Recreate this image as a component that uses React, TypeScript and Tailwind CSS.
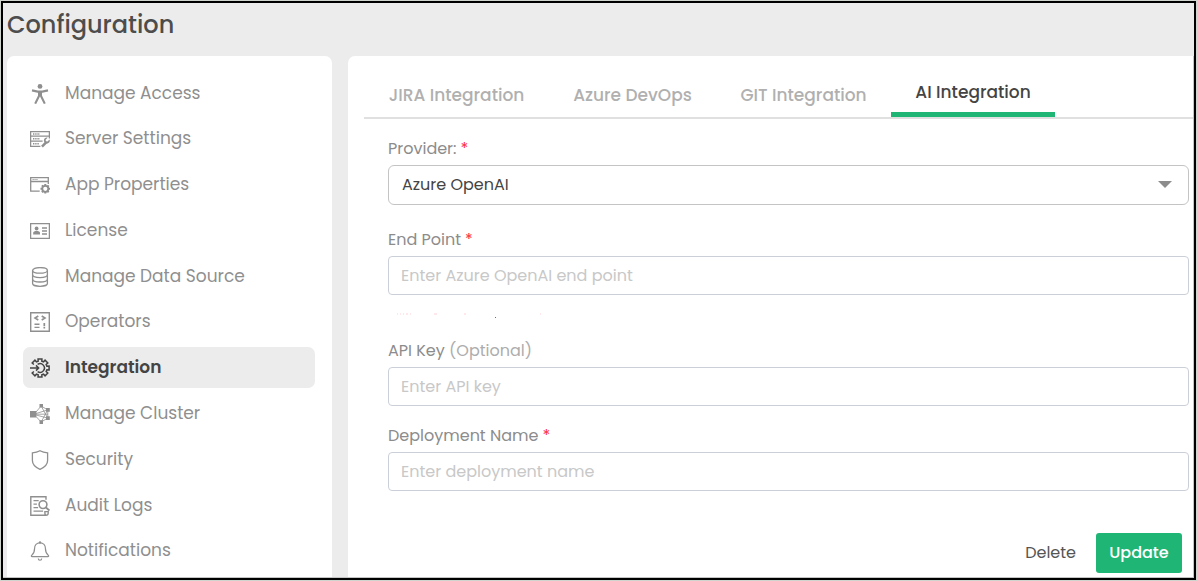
import { useState, type ReactNode } from "react";

type NavItem = {
  name: string;
  icon: ReactNode;
};

type Tab = {
  name: string;
  width: string;
};

// seven teeth of an eight-toothed gear, left open where the arrow comes in
const GEAR_POINTS = [-3, -2, -1, 0, 1, 2, 3]
  .flatMap(k => [
    [7.1, k * 45 - 15],
    [9.3, k * 45 - 12],
    [9.3, k * 45 + 12],
    [7.1, k * 45 + 15],
  ])
  .map(([r, deg]) => {
    const a = (deg * Math.PI) / 180;
    return `${(10 + r * Math.cos(a)).toFixed(2)},${(10 + r * Math.sin(a)).toFixed(2)}`;
  })
  .join(" ");

const NAV_ITEMS: NavItem[] = [
  {
    name: "Manage Access",
    icon: (
      <>
        <circle cx="10" cy="2.4" r="2.4" fill="currentColor" stroke="none" />
        <path d="M2 6.4 7.6 7.6h4.8L18 6.4" strokeWidth="2.1" />
        <path d="M8 7.5h4v5.2H8z" fill="currentColor" stroke="none" />
        <path d="M9 12 5.2 19.6M11 12l3.8 7.6" strokeWidth="2.1" />
      </>
    ),
  },
  {
    name: "Server Settings",
    icon: (
      <>
        <path d="M.6 2.6h18.8v4.6H.6zM12.6 12.2H.6V7.2h18.8v2.2M10.4 17.4H.6v-5.2" strokeWidth="1.3" />
        <path d="M3 4.9h7M3 9.7h7M3 14.8h6" strokeDasharray="1.4 .8" strokeWidth="1.5" />
        <path d="M12 17.6l4.4-4.4" strokeWidth="2.6" />
        <path d="M19.5 10.6l-2 2-1.6-.4-.3-1.5 2-2c-2-.6-4.2 1.2-3.6 3.5.4 1.8 2.6 2.6 4 2 1.6-.6 2.2-2.2 1.5-3.6z" fill="currentColor" stroke="none" />
      </>
    ),
  },
  {
    name: "App Properties",
    icon: (
      <>
        <path d="M18.3 9V2.6H.7v13.6h9M.7 6.5h17.6" strokeWidth="1.3" />
        <path d="M2.6 4.5h5" strokeDasharray="1.1 .8" strokeWidth="1.2" />
        <circle cx="15.3" cy="13.8" r="3" strokeWidth="1.8" />
        <path d="M15.3 9v1.5M15.3 17.1v1.5M10.5 13.8H12M18.600 13.8h1.5M11.9 10.400l1.1 1.1M17.6 16.1l1.1 1.1M11.9 17.2l1.1-1.1M17.6 11.500l1.1-1.1" strokeWidth="2" />
      </>
    ),
  },
  {
    name: "License",
    icon: (
      <>
        <path d="M.6 2.6h18.8v14.8H.6z" strokeWidth="1.3" />
        <circle cx="6.6" cy="7.5" r="1.9" fill="currentColor" stroke="none" />
        <path d="M3.2 13.6v-1.8c0-1.1 1.5-1.7 3.4-1.7s3.4.6 3.4 1.7v1.8z" fill="currentColor" stroke="none" />
        <path d="M12 7h5M12 10h5M12 13h5" strokeWidth="1.3" />
      </>
    ),
  },
  {
    name: "Manage Data Source",
    icon: (
      <>
        <ellipse cx="10" cy="3.4" rx="7.4" ry="2.8" strokeWidth="1.3" />
        <path d="M2.6 3.4v13c0 1.6 3.3 2.9 7.4 2.9s7.4-1.3 7.4-2.9v-13" strokeWidth="1.3" />
        <path d="M2.6 7.8c0 1.6 3.3 2.8 7.4 2.8s7.4-1.2 7.4-2.8M2.6 12.2c0 1.6 3.3 2.8 7.4 2.8s7.4-1.2 7.4-2.8" strokeWidth="1.3" />
      </>
    ),
  },
  {
    name: "Operators",
    icon: (
      <>
        <path d="M.7.7h18.6v18.6H.7z" strokeWidth="1.4" />
        <path d="M8.3 4 5 6l3.3 2M11.7 4 15 6l-3.3 2" strokeWidth="1.6" />
        <path d="M4.5 12.2h5M4.5 15.4h5" strokeWidth="1.4" />
        <path d="M14.3 11v3.2M14.3 15v1.6" strokeWidth="1.7" />
      </>
    ),
  },
  {
    name: "Integration",
    icon: (
      <>
        <polyline points={GEAR_POINTS} strokeWidth="1.5" />
        <path d="M0 10h8.4M6 7.4 8.600 10 6 12.600" strokeWidth="1.5" />
        <path d="M7.6 6.3a4.4 4.4 0 1 1 0 7.4" strokeWidth="1.5" />
      </>
    ),
  },
  {
    name: "Manage Cluster",
    icon: (
      <>
        <path d="M0 7h6.4v6.4H0zM9.5 0H13v3.5H9.5zM16 4h3.8v3.8H16zM16 12.2h3.8V16H16zM9.5 16.2H13v3.7H9.5z" fill="currentColor" stroke="none" />
        <path d="M6 8 11.2 2l6.6 4v8l-6.6 4L6 12.5M6 9.5 17.5 6M6 11l11.5 3M11.2 2l6.4 12M11.2 18l6.4-12M6 10.2h12" strokeWidth=".8" />
      </>
    ),
  },
  {
    name: "Security",
    icon: <path d="M10 .7C7.7 2 5.2 2.6 2.4 2.8v7.7c0 4.3 3.8 7.2 7.6 8.8 3.8-1.6 7.6-4.5 7.6-8.8V2.8C14.8 2.6 12.3 2 10 .7z" strokeWidth="1.3" />,
  },
  {
    name: "Audit Logs",
    icon: (
      <>
        <path d="M16 3.8V.8H.8v18.4H16c1.4 0 2.2-1 2.2-2.3v-1.3h-3.3v1.5c0 1.2.5 2.1 1.3 2.1" strokeWidth="1.4" />
        <path d="M3.5 4.6h5.2M3.5 8.1h3.4M3.5 11.6h4.6M3.5 15.2h9.6" strokeWidth="1.3" />
        <circle cx="13" cy="8.6" r="3.9" strokeWidth="1.6" />
        <path d="m15.8 11.4 3.6 3.2" strokeWidth="1.9" />
      </>
    ),
  },
  {
    name: "Notifications",
    icon: (
      <>
        <path d="M10 1.8c-3.4 0-5.4 2.5-5.4 5.4 0 4.6-1.5 5.9-3 7.3-.5.5-.2 1.2.4 1.2h16c.6 0 .9-.7.4-1.2-1.5-1.4-3-2.7-3-7.3 0-2.9-2-5.4-5.4-5.4z" strokeWidth="1.2" />
        <path d="M8.3 17.4c0 2.4 3.4 2.4 3.4 0" strokeWidth="1.2" />
        <circle cx="10" cy="1.4" r="1.2" fill="currentColor" stroke="none" />
      </>
    ),
  },
];

const TABS: Tab[] = [
  { name: "JIRA Integration", width: "w-[185px]" },
  { name: "Azure DevOps", width: "w-[167px]" },
  { name: "GIT Integration", width: "w-[175px]" },
  { name: "AI Integration", width: "w-[164px]" },
];

const INPUT_CLASS =
  "block h-[39px] w-full rounded-[4px] border border-[#cbd0d8] bg-white px-3 text-[16px] text-[#444] placeholder:text-[#c8c8c8] focus:outline-none focus:border-[#1fb574]";

function Required() {
  return <span className="ml-1 text-[#ff2a3c]">*</span>;
}

function Label({ htmlFor, children }: { htmlFor: string; children: ReactNode }) {
  return (
    <label htmlFor={htmlFor} className="mb-1 block text-[16px] leading-6 text-[#8c8c8c]">
      {children}
    </label>
  );
}

export default function App() {
  const [section, setSection] = useState("Integration");
  const [tab, setTab] = useState("AI Integration");
  const [provider, setProvider] = useState("Azure OpenAI");

  return (
    <div className="flex min-h-screen bg-[#cfd4cf] p-px font-['Poppins',Inter,sans-serif]">
      <div className="flex min-w-0 flex-1 flex-col border-2 border-black bg-[#ececec]">
        <h1 className="mb-[11px] pt-[2px] pl-1 text-[24px] leading-10 font-medium text-[#4d4d4d]">Configuration</h1>

        <div className="flex flex-1 gap-4 border-r border-b border-[#c4c4c4] pl-1">
          <nav className="flex w-[325px] shrink-0 flex-col justify-between rounded-t-[7px] bg-white px-4 pt-4 pb-[6px]">
            {NAV_ITEMS.map(item => {
              const active = item.name === section;
              return (
                <button
                  key={item.name}
                  type="button"
                  onClick={() => setSection(item.name)}
                  className={`flex h-[41px] w-[292px] items-center gap-[15px] rounded-[7px] pl-[7px] text-left text-[17px] leading-6 ${
                    active ? "bg-[#ececec] font-semibold text-[#444]" : "text-[#8f8f8f]"
                  }`}
                >
                  <svg viewBox="0 0 20 20" className="mt-[2px] h-5 w-5 shrink-0" fill="none" stroke="currentColor">
                    {item.icon}
                  </svg>
                  {item.name}
                </button>
              );
            })}
          </nav>

          <main className="min-w-0 flex-1 rounded-tl-[7px] bg-white pl-4">
            <div role="tablist" className="flex h-[63px] items-stretch border-b-2 border-[#e0e0e0]">
              {TABS.map(t => {
                const active = t.name === tab;
                return (
                  <button
                    key={t.name}
                    type="button"
                    role="tab"
                    aria-selected={active}
                    onClick={() => setTab(t.name)}
                    className={`${t.width} shrink-0 pt-4 text-[17px] leading-6 font-medium ${
                      active ? "border-b-5 border-[#1fb574] text-[#444]" : "text-[#b0b0b0]"
                    }`}
                  >
                    {t.name}
                  </button>
                );
              })}
            </div>

            <form className="flex flex-col pt-[18px] pr-1 pl-6" onSubmit={e => e.preventDefault()}>
              <Label htmlFor="provider">
                Provider:<Required />
              </Label>
              <div className="relative mb-[23px]">
                <select
                  id="provider"
                  value={provider}
                  onChange={e => setProvider(e.target.value)}
                  className="block h-10 w-full appearance-none rounded-[6px] border border-[#c4c4c4] bg-white px-[13px] text-[16px] text-[#444] focus:outline-none"
                >
                  <option>Azure OpenAI</option>
                  <option>OpenAI</option>
                </select>
                <svg viewBox="0 0 14 7" className="pointer-events-none absolute top-4 right-[17px] h-[7px] w-[14px] fill-[#8c8c8c]">
                  <path d="M0 0h14L7 7z" />
                </svg>
              </div>

              <Label htmlFor="endpoint">
                End Point<Required />
              </Label>
              <input id="endpoint" type="text" placeholder="Enter Azure OpenAI end point" className={INPUT_CLASS} />

              {/* clipped remains of the validation line */}
              <svg viewBox="0 0 150 5" className="mt-[18px] mb-[21px] ml-2 h-[5px] w-[150px]">
                <path d="M1 1h1M4 1h1M7 1h1M10 1h2M14 1h1M38 1h3M68 1h2M144 1h1" stroke="#ffd0d6" />
                <path d="M99 4.5h1" stroke="#e8364a" />
              </svg>

              <Label htmlFor="api-key">
                API Key <span className="text-[#adadad]">(Optional)</span>
              </Label>
              <input id="api-key" type="text" placeholder="Enter API key" className={`${INPUT_CLASS} mb-[18px]`} />

              <Label htmlFor="deployment">
                Deployment Name<Required />
              </Label>
              <input id="deployment" type="text" placeholder="Enter deployment name" className={INPUT_CLASS} />

              <div className="mt-[42px] mr-[7px] flex justify-end gap-5">
                <button type="button" className="h-10 text-[16px] text-[#555]">Delete</button>
                <button type="submit" className="h-10 w-[86px] rounded-[3px] bg-[#1fb574] text-[16px] font-medium text-white">
                  Update
                </button>
              </div>
            </form>
          </main>
        </div>
      </div>
    </div>
  );
}
